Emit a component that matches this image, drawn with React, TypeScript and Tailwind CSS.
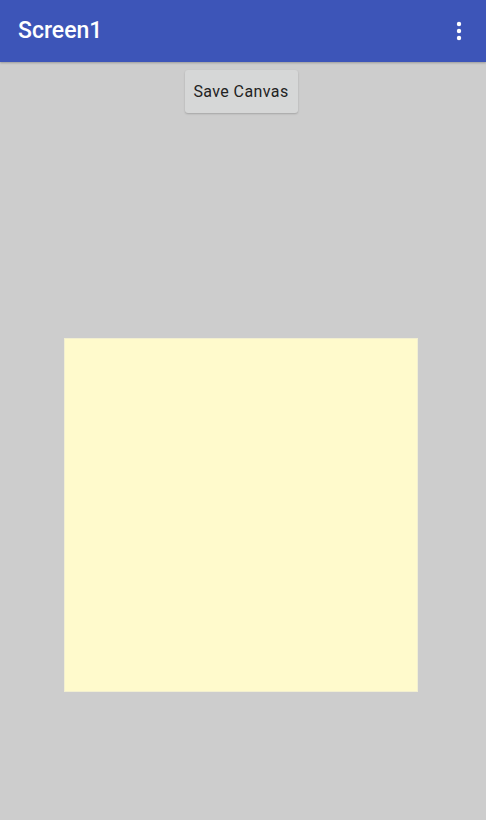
import React from 'react';

const App: React.FC = () => {
  return (
    <div className="w-[486px] h-[820px] bg-[#cdcdcd] flex flex-col overflow-hidden" style={{ fontFamily: 'Roboto, "Noto Sans", sans-serif' }}>
      {/* App bar */}
      <div className="h-[62px] bg-[#3d55b8] flex items-center justify-between pl-[18px] pr-[24px] shadow-[0_1px_2px_rgba(0,0,0,0.25)] shrink-0">
        <span className="text-white text-[23px] font-medium">Screen1</span>
        <svg width="6" height="20" viewBox="0 0 6 20">
          <circle cx="3" cy="3" r="2.2" fill="#fff" />
          <circle cx="3" cy="10" r="2.2" fill="#fff" />
          <circle cx="3" cy="17" r="2.2" fill="#fff" />
        </svg>
      </div>

      {/* Save button */}
      <div className="flex justify-center pt-[8px] pr-[4px]">
        <button className="w-[113px] h-[43px] bg-[#d6d7d7] rounded-[3px] shadow-[0_1px_2px_rgba(0,0,0,0.2)] text-[16px] tracking-[0.4px] text-[#222] flex items-center justify-center">
          Save Canvas
        </button>
      </div>

      {/* Canvas */}
      <div className="flex justify-center pt-[225px] pr-[4px]">
        <div className="w-[354px] h-[354px] bg-[#fffacc] border border-[#f2efd0]" />
      </div>
    </div>
  );
};

export default App;
